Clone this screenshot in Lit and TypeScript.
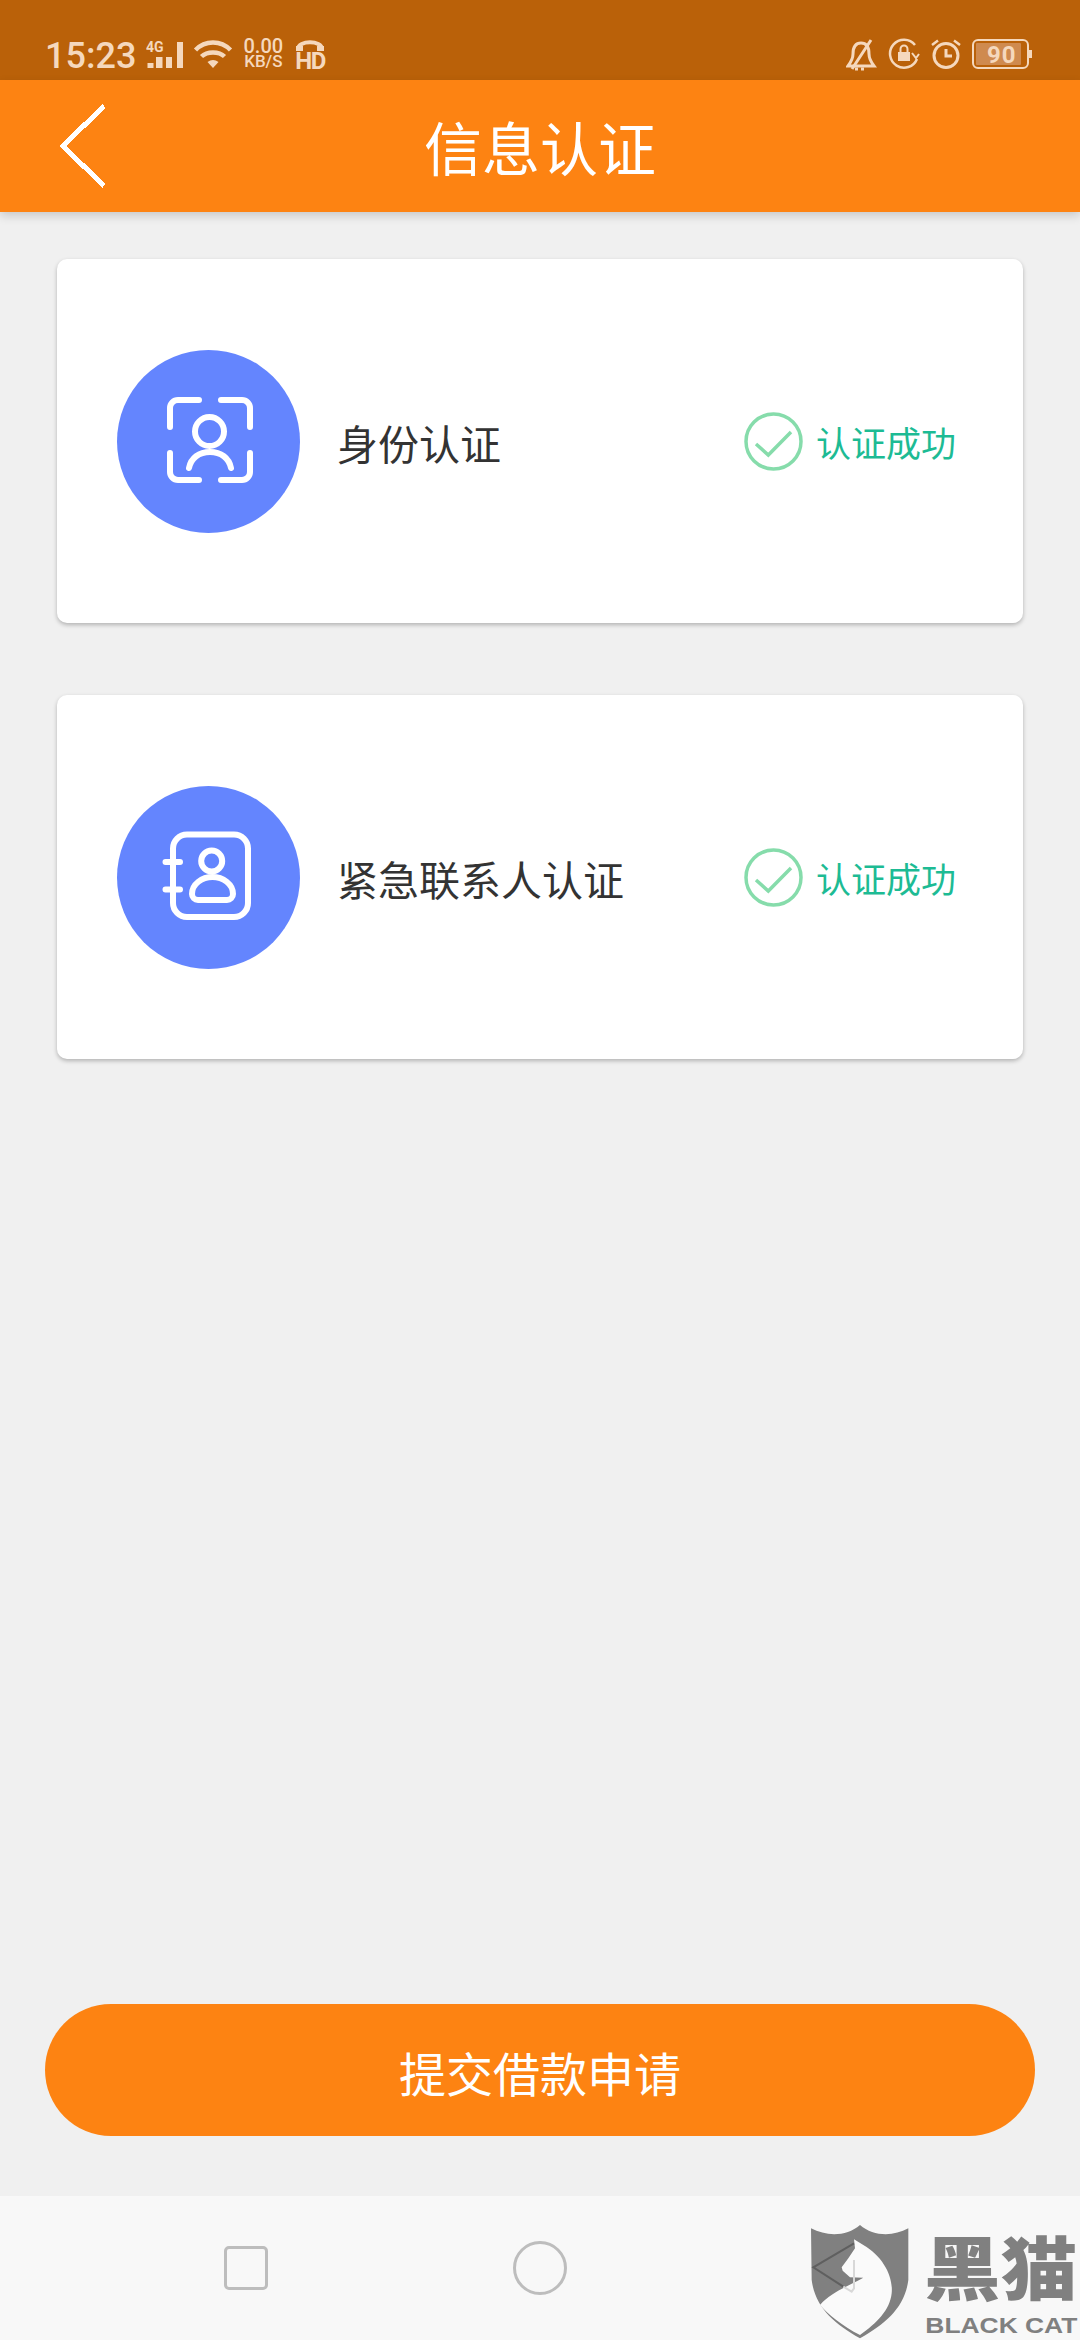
import { LitElement, html, css, svg } from 'lit';
import { customElement } from 'lit/decorators.js';

const idIcon = svg`
  <path d="M53 77V58a8 8 0 0 1 8-8H82M104 50H125a8 8 0 0 1 8 8V77M53 103V122a8 8 0 0 0 8 8H82M104 130H125a8 8 0 0 0 8-8V103" />
  <circle cx="92.5" cy="81.5" r="14.5" />
  <path d="M72 118C74 108 82 102 93 102S112 108 114 118" />
`;

const contactIcon = svg`
  <rect x="56" y="48.5" width="75" height="82.5" rx="14" />
  <path d="M48.5 76H63M48.5 103.500H63" />
  <circle cx="94.7" cy="75" r="10.500" />
  <path d="M81 114H110a6 6 0 0 0 6-6C116 98 106 91 95.500 91S75 98 75 108a6 6 0 0 0 6 6Z" />
`;

const items = [
  { label: '身份认证', icon: idIcon },
  { label: '紧急联系人认证', icon: contactIcon },
];

@customElement('app-root')
export class AppRoot extends LitElement {
  static styles = css`
    :host {
      display: flex;
      flex-direction: column;
      position: relative;
      width: 1080px;
      height: 2340px;
      overflow: hidden;
      background: #f0f0f0;
      font-family: "Noto Sans CJK SC", "Liberation Sans", sans-serif;
    }
    .status {
      display: flex;
      align-items: center;
      flex: none;
      box-sizing: border-box;
      height: 80px;
      padding: 28px 48px 0 45px;
      gap: 10px;
      background: #ba6109;
      color: #f5d8bd;
      font-family: Roboto, "Liberation Sans", sans-serif;
    }
    .status svg {
      display: block;
      flex: none;
      fill: none;
      stroke: #f5d8bd;
      font-family: Roboto, "Liberation Sans", sans-serif;
    }
    .time {
      font-size: 36px;
      font-weight: 500;
      line-height: 32px;
      margin-top: 4px;
    }
    .speed {
      width: 40px;
      font-size: 17px;
      font-weight: 500;
      line-height: 15px;
      text-align: center;
      white-space: pre-line;
    }
    .speed::first-line {
      font-size: 20px;
    }
    .hd {
      display: flex;
      flex-direction: column;
      width: 30px;
      margin-left: 2px;
    }
    .hd span {
      font-size: 24px;
      font-weight: 700;
      line-height: 18px;
      letter-spacing: -1.500px;
    }
    .status-right {
      display: flex;
      align-items: center;
      margin-left: auto;
      gap: 11px;
    }
    .header {
      display: grid;
      grid-template-columns: 1fr auto 1fr;
      align-items: center;
      flex: none;
      position: relative;
      height: 132px;
      padding: 0 60px;
      background: #fd8312;
      box-shadow: 0 4px 9px rgba(0, 0, 0, 0.16);
      color: #fff;
    }
    .header svg {
      display: block;
    }
    .title {
      font-size: 58px;
      font-weight: 400;
      line-height: 80px;
    }
    .main {
      display: flex;
      flex-direction: column;
      flex: 1;
      padding: 47px 45px 60px;
    }
    .card {
      display: flex;
      align-items: center;
      height: 364px;
      margin: 0 12px 72px;
      padding: 0 67px 0 60px;
      border-radius: 10px;
      background: #fff;
      box-shadow: 0 2px 4px rgba(0, 0, 0, 0.26);
    }
    .avatar {
      display: block;
      flex: none;
      width: 183px;
      height: 183px;
      margin-right: 37px;
      fill: none;
      stroke: #fff;
      stroke-width: 6;
      stroke-linecap: round;
    }
    .avatar .disc {
      fill: #6485fe;
      stroke: none;
    }
    .label {
      font-size: 41px;
      line-height: 56px;
      color: #333;
      margin-top: 2px;
    }
    .state {
      display: flex;
      align-items: center;
      gap: 13px;
      margin-left: auto;
      font-size: 35px;
      line-height: 59px;
      color: #1dbb94;
    }
    .state span {
      margin-top: 1px;
    }
    .state svg {
      display: block;
      fill: none;
      stroke: #86dcab;
      stroke-width: 3.5;
    }
    .submit {
      display: flex;
      align-items: center;
      justify-content: center;
      height: 132px;
      margin-top: auto;
      border-radius: 66px;
      background: #fd8312;
      color: #fff;
      font-size: 47px;
      line-height: 60px;
    }
    .submit span {
      margin-top: 3px;
    }
    .nav {
      display: flex;
      align-items: center;
      flex: none;
      height: 144px;
      padding-left: 224px;
      background: #f8f8f8;
    }
    .nav-square {
      box-sizing: border-box;
      width: 44px;
      height: 44px;
      border: 3px solid #bdbdbd;
      border-radius: 5px;
    }
    .nav-circle {
      box-sizing: border-box;
      width: 54px;
      height: 54px;
      margin-left: 245px;
      border: 3px solid #bdbdbd;
      border-radius: 50%;
    }
    .watermark {
      position: absolute;
      right: 0;
      bottom: 0;
      width: 300px;
      height: 160px;
    }
  `;

  private renderStatus() {
    return html`
      <div class="status">
        <span class="time">15:23</span>
        <svg width="37" height="32" viewBox="0 0 37 32">
          <text x="0" y="14" font-size="14" font-weight="700" fill="#f5d8bd" stroke="none">4G</text>
          <path fill="#f5d8bd" stroke="none" d="M1.500 25h6v5h-6zM10 19h6.500v11H10zM20 19h6v11h-6zM31 4h6v26h-6z" />
        </svg>
        <svg width="40" height="32" viewBox="0 0 40 32" stroke-width="4.500">
          <path d="M2.500 12C12 2 28 2 37.500 12M8.500 18.500C14 13 26 13 31.500 18.500" />
          <path fill="#f5d8bd" stroke="none" d="M14.500 24Q20 20 25.500 24L20 30Z" />
        </svg>
        <span class="speed">${'0.00\nKB/S'}</span>
        <div class="hd">
          <svg width="30" height="13" viewBox="0 0 30 13" stroke-width="4">
            <path d="M3 10C3 1 27 1 27 10" />
            <path fill="#f5d8bd" stroke="none" d="M1 7h7v5H1zM22 7h7v5h-7z" />
          </svg>
          <span>HD</span>
        </div>
        <div class="status-right">
          <svg width="31" height="33" viewBox="0 0 31 33" stroke-width="3">
            <path d="M15 5C8 5 7 11 7 16C7 21 5 24 2 28H28C25 24 23 21 23 16C23 11 22 5 15 5Z" />
            <path d="M6 31L25 2M9 31h3M15 31h3" />
          </svg>
          <svg width="32" height="32" viewBox="0 0 32 32" stroke-width="2.500">
            <path d="M29 21A14 14 0 1 1 27 7" />
            <path d="M24 15l4 5l3-4" stroke-width="2" />
            <path fill="#f5d8bd" stroke="none" d="M10 14h12v9H10z" />
            <path stroke-width="2" d="M12.500 14v-3a3.500 3.500 0 0 1 7 0v3" />
          </svg>
          <svg width="30" height="30" viewBox="0 0 30 30" stroke-width="3">
            <circle cx="15" cy="16.500" r="12" />
            <path d="M15 10v7h6" />
            <path stroke-width="2.500" d="M1 6L7 1.500M29 6L23 1.500" />
          </svg>
          <svg width="60" height="30" viewBox="0 0 60 30" stroke-width="2">
            <rect x="1" y="1" width="55" height="28" rx="5" />
            <rect fill="#cf8a4f" stroke="none" x="4" y="4" width="45" height="22" rx="1" />
            <path fill="#f5d8bd" stroke="none" d="M57 11h3v8h-3z" />
            <text x="15" y="24" font-size="24" font-weight="700" letter-spacing="1" fill="#f5d8bd" stroke="none">90</text>
          </svg>
        </div>
      </div>
    `;
  }

  private renderCard(item: { label: string; icon: unknown }) {
    return html`
      <div class="card">
        <svg class="avatar" viewBox="0 0 183 183">
          <circle class="disc" cx="91.5" cy="91.5" r="91.500" />
          ${item.icon}
        </svg>
        <span class="label">${item.label}</span>
        <div class="state">
          <svg width="59" height="59" viewBox="0 0 59 59">
            <circle cx="29.500" cy="29.500" r="27.500" />
            <path d="M12 32L24.300 43L47 20" />
          </svg>
          <span>认证成功</span>
        </div>
      </div>
    `;
  }

  private renderWatermark() {
    // drawn in the coordinates of a 3x crop, hence the 900x480 box
    return html`
      <svg class="watermark" viewBox="0 0 900 480">
        <path fill="#808080" d="M93 145C140 170 200 170 240 135C280 170 340 170 385 145L385 300C375 380 320 430 240 475C160 430 105 380 95 300Z" />
        <path fill="#fafafa" d="M222 178L250 195C310 230 340 290 335 340C330 390 290 430 240 465C190 440 140 400 120 375C150 340 190 325 250 293L210 292L188 272L185 262L205 235L225 205Z" />
        <path fill="none" stroke="#5f5f5f" stroke-width="6" d="M222 190L100 262L190 320" />
        <path fill="none" stroke="#d8d8d8" stroke-width="6" d="M190 320L215 335L222 325V240" />
        <text x="432" y="345" font-size="208" font-weight="900" textLength="460" lengthAdjust="spacingAndGlyphs" fill="#808080">黑猫</text>
        <text x="436" y="458" font-family="Liberation Sans" font-size="66" font-weight="700" textLength="456" lengthAdjust="spacingAndGlyphs" fill="#808080">BLACK CAT</text>
      </svg>
    `;
  }

  render() {
    return html`
      ${this.renderStatus()}
      <div class="header">
        <svg width="46" height="84" viewBox="0 0 46 84" fill="none" stroke="#fff" stroke-width="5" shape-rendering="crispEdges">
          <path d="M44 2L3 42L44 82" />
        </svg>
        <span class="title">信息认证</span>
      </div>
      <div class="main">
        ${items.map((item) => this.renderCard(item))}
        <div class="submit"><span>提交借款申请</span></div>
      </div>
      <div class="nav">
        <div class="nav-square"></div>
        <div class="nav-circle"></div>
      </div>
      ${this.renderWatermark()}
    `;
  }
}

declare global {
  interface HTMLElementTagNameMap {
    'app-root': AppRoot;
  }
}
